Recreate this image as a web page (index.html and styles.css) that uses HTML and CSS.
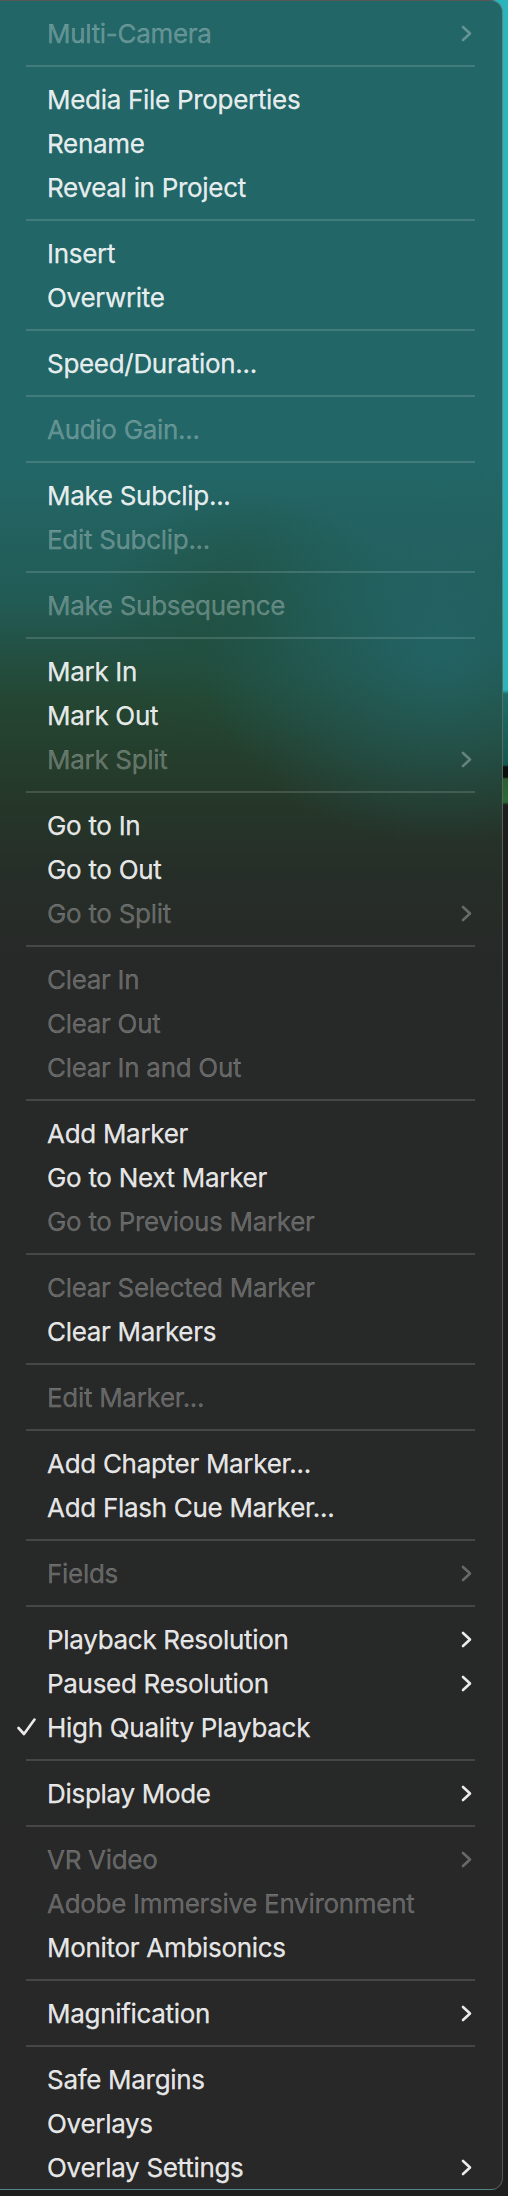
FILE: index.html
```html
<!DOCTYPE html>
<html>
  <head>
    <title>Monitor Menu</title>
    <link rel="stylesheet" href="styles.css">
  </head>
  <body>
    <div class="menu">
      <div class="item dis"><span class="check"></span><span class="label">Multi-Camera</span><svg class="chev" viewBox="0 0 11 17"><polyline points="2,2 9,8.5 2,15"/></svg></div>
      <div class="sep"><div></div></div>
      <div class="item"><span class="check"></span><span class="label">Media File Properties</span></div>
      <div class="item"><span class="check"></span><span class="label">Rename</span></div>
      <div class="item"><span class="check"></span><span class="label">Reveal in Project</span></div>
      <div class="sep"><div></div></div>
      <div class="item"><span class="check"></span><span class="label">Insert</span></div>
      <div class="item"><span class="check"></span><span class="label">Overwrite</span></div>
      <div class="sep"><div></div></div>
      <div class="item"><span class="check"></span><span class="label">Speed/Duration...</span></div>
      <div class="sep"><div></div></div>
      <div class="item dis"><span class="check"></span><span class="label">Audio Gain...</span></div>
      <div class="sep"><div></div></div>
      <div class="item"><span class="check"></span><span class="label">Make Subclip...</span></div>
      <div class="item dis"><span class="check"></span><span class="label">Edit Subclip...</span></div>
      <div class="sep"><div></div></div>
      <div class="item dis"><span class="check"></span><span class="label">Make Subsequence</span></div>
      <div class="sep"><div></div></div>
      <div class="item"><span class="check"></span><span class="label">Mark In</span></div>
      <div class="item"><span class="check"></span><span class="label">Mark Out</span></div>
      <div class="item dis"><span class="check"></span><span class="label">Mark Split</span><svg class="chev" viewBox="0 0 11 17"><polyline points="2,2 9,8.5 2,15"/></svg></div>
      <div class="sep"><div></div></div>
      <div class="item"><span class="check"></span><span class="label">Go to In</span></div>
      <div class="item"><span class="check"></span><span class="label">Go to Out</span></div>
      <div class="item dis"><span class="check"></span><span class="label">Go to Split</span><svg class="chev" viewBox="0 0 11 17"><polyline points="2,2 9,8.5 2,15"/></svg></div>
      <div class="sep"><div></div></div>
      <div class="item dis"><span class="check"></span><span class="label">Clear In</span></div>
      <div class="item dis"><span class="check"></span><span class="label">Clear Out</span></div>
      <div class="item dis"><span class="check"></span><span class="label">Clear In and Out</span></div>
      <div class="sep"><div></div></div>
      <div class="item"><span class="check"></span><span class="label">Add Marker</span></div>
      <div class="item"><span class="check"></span><span class="label">Go to Next Marker</span></div>
      <div class="item dis"><span class="check"></span><span class="label">Go to Previous Marker</span></div>
      <div class="sep"><div></div></div>
      <div class="item dis"><span class="check"></span><span class="label">Clear Selected Marker</span></div>
      <div class="item"><span class="check"></span><span class="label">Clear Markers</span></div>
      <div class="sep"><div></div></div>
      <div class="item dis"><span class="check"></span><span class="label">Edit Marker...</span></div>
      <div class="sep"><div></div></div>
      <div class="item"><span class="check"></span><span class="label">Add Chapter Marker...</span></div>
      <div class="item"><span class="check"></span><span class="label">Add Flash Cue Marker...</span></div>
      <div class="sep"><div></div></div>
      <div class="item dis"><span class="check"></span><span class="label">Fields</span><svg class="chev" viewBox="0 0 11 17"><polyline points="2,2 9,8.5 2,15"/></svg></div>
      <div class="sep"><div></div></div>
      <div class="item"><span class="check"></span><span class="label">Playback Resolution</span><svg class="chev" viewBox="0 0 11 17"><polyline points="2,2 9,8.5 2,15"/></svg></div>
      <div class="item"><span class="check"></span><span class="label">Paused Resolution</span><svg class="chev" viewBox="0 0 11 17"><polyline points="2,2 9,8.5 2,15"/></svg></div>
      <div class="item"><svg class="check" viewBox="0 0 19 18"><polyline points="1.5,10 7,16 17.5,1.5"/></svg><span class="label">High Quality Playback</span></div>
      <div class="sep"><div></div></div>
      <div class="item"><span class="check"></span><span class="label">Display Mode</span><svg class="chev" viewBox="0 0 11 17"><polyline points="2,2 9,8.5 2,15"/></svg></div>
      <div class="sep"><div></div></div>
      <div class="item dis"><span class="check"></span><span class="label">VR Video</span><svg class="chev" viewBox="0 0 11 17"><polyline points="2,2 9,8.5 2,15"/></svg></div>
      <div class="item dis"><span class="check"></span><span class="label">Adobe Immersive Environment</span></div>
      <div class="item"><span class="check"></span><span class="label">Monitor Ambisonics</span></div>
      <div class="sep"><div></div></div>
      <div class="item"><span class="check"></span><span class="label">Magnification</span><svg class="chev" viewBox="0 0 11 17"><polyline points="2,2 9,8.5 2,15"/></svg></div>
      <div class="sep"><div></div></div>
      <div class="item"><span class="check"></span><span class="label">Safe Margins</span></div>
      <div class="item"><span class="check"></span><span class="label">Overlays</span></div>
      <div class="item"><span class="check"></span><span class="label">Overlay Settings</span><svg class="chev" viewBox="0 0 11 17"><polyline points="2,2 9,8.5 2,15"/></svg></div>
    </div>
  </body>
</html>
```

FILE: styles.css
```css
body {
  margin: 0;
  width: 508px;
  height: 2196px;
  overflow: hidden;
  font-family: Inter, "Noto Sans", sans-serif;
  /* what shows behind the menu on the right edge */
  background: linear-gradient(to bottom, #2ab4bc 0, #2ab4bc 690px, #1b6f6b 694px, #175650 765px,
    #0b100c 767px, #0b100c 777px, #2b5f31 779px, #2b6a36 802px, #1e1e1e 805px, #1e1e1e 100%);
}

/* Menu panel */
.menu {
  width: 503px;
  height: 2190px;
  box-sizing: border-box;
  padding-top: 10px;
  border: 1px solid rgba(255, 255, 255, 0.22);
  border-left: none;
  border-radius: 0 12px 12px 0;
  background:
    radial-gradient(ellipse 240px 190px at 440px 650px, rgba(34, 100, 102, 0.95), rgba(34, 100, 102, 0)),
    radial-gradient(ellipse 150px 130px at 250px 620px, rgba(32, 78, 60, 0.8), rgba(32, 78, 60, 0)),
    linear-gradient(to bottom, #236667 0, #236667 470px, #225b55 600px, #244632 700px,
      #253a2a 780px, #262e28 870px, #272828 980px, #282828 100%);
}

.item {
  display: grid;
  grid-template-columns: 30px 1fr 11px;
  align-items: center;
  height: 44px;
  padding: 0 30px 0 17px;
  color: rgba(255, 255, 255, 0.9);
  font-size: 26px;
  letter-spacing: -0.3px;
  -webkit-text-stroke: 0.25px currentColor;
}

.item.dis {
  color: rgba(255, 255, 255, 0.3);
}

.label {
  white-space: nowrap;
}

.check {
  width: 19px;
  height: 18px;
  fill: none;
  stroke: currentColor;
  stroke-width: 2.6;
  stroke-linecap: round;
  stroke-linejoin: round;
}

.chev {
  width: 11px;
  height: 17px;
  fill: none;
  stroke: currentColor;
  stroke-width: 2.6;
  stroke-linecap: round;
  stroke-linejoin: round;
}

/* Separator */
.sep {
  display: flex;
  align-items: center;
  height: 22px;
  padding: 0 27px 0 26px;
}

.sep div {
  flex: 1;
  height: 2px;
  background: rgba(255, 255, 255, 0.14);
}
```
